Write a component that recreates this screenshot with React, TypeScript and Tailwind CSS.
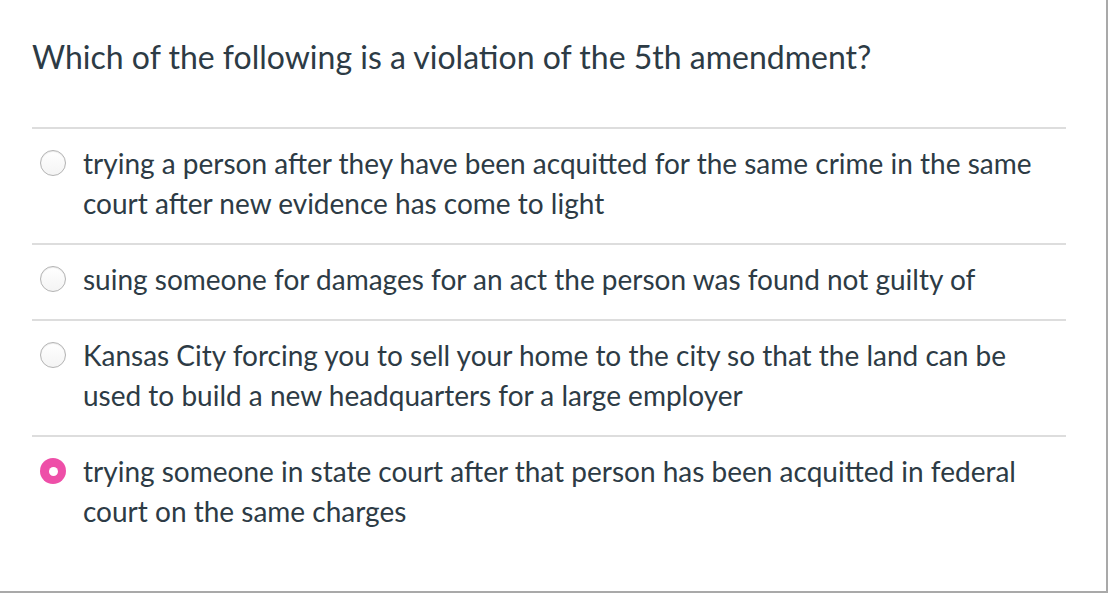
import React from "react";

const ANSWERS = [
  { text: "trying a person after they have been acquitted for the same crime in the same court after new evidence has come to light", selected: false },
  { text: "suing someone for damages for an act the person was found not guilty of", selected: false },
  { text: "Kansas City forcing you to sell your home to the city so that the land can be used to build a new headquarters for a large employer", selected: false },
  { text: "trying someone in state court after that person has been acquitted in federal court on the same charges", selected: true },
];

function Radio({ selected }: { selected: boolean }) {
  if (selected) {
    return (
      <span className="mt-[7px] ml-2 flex h-[26px] w-[26px] shrink-0 items-center justify-center rounded-full bg-[#ee4fa8]">
        <span className="h-[9px] w-[9px] rounded-full bg-white" />
      </span>
    );
  }
  return (
    <span className="mt-[7px] ml-2 h-[26px] w-[26px] shrink-0 rounded-full border border-[#b3b3b3] bg-gradient-to-b from-white to-[#f4f4f4] shadow-[inset_0_1px_1px_rgba(0,0,0,0.08)]" />
  );
}

export default function App() {
  return (
    <div className="h-[596px] w-[1114px] bg-white font-['Lato',sans-serif] text-[#2d3b45]">
      <div className="h-[593px] w-[1108px] border-r-2 border-b-2 border-[#a9a9a9] pl-8 pr-[40px]">
        <h2 className="pt-[37px] pb-[50px] text-[32px] leading-[40px] font-normal">
          Which of the following is a violation of the 5th amendment?
        </h2>
        <ul>
          {ANSWERS.map((a, i) => (
            <li key={i} className="flex items-start gap-[17px] border-t-2 border-[#dddddd] pt-[14px] pb-5 pr-5">
              <Radio selected={a.selected} />
              <span className="text-[28px] leading-[40px]">{a.text}</span>
            </li>
          ))}
        </ul>
      </div>
    </div>
  );
}
